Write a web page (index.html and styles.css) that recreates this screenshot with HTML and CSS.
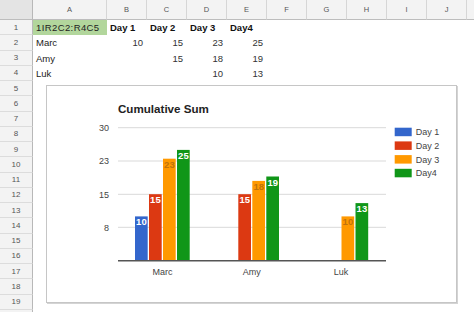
FILE: index.html
```html
<!DOCTYPE html>
<html lang="en">
<head>
    <meta charset="UTF-8">
    <title>Cumulative Sum</title>
    <link rel="stylesheet" href="styles.css">
</head>
<body>
    <div class="sheet">
        <div class="row head">
            <div class="num corner"></div>
            <div class="col wide">A</div>
            <div class="col">B</div>
            <div class="col">C</div>
            <div class="col">D</div>
            <div class="col">E</div>
            <div class="col">F</div>
            <div class="col">G</div>
            <div class="col">H</div>
            <div class="col">I</div>
            <div class="col">J</div>
            <div class="col rest"></div>
        </div>
        <div class="row">
            <div class="num">1</div>
            <div class="cell wide range">1IR2C2:R4C5</div>
            <div class="cell bold">Day 1</div>
            <div class="cell bold">Day 2</div>
            <div class="cell bold">Day 3</div>
            <div class="cell bold">Day4</div>
        </div>
        <div class="row">
            <div class="num">2</div>
            <div class="cell wide">Marc</div>
            <div class="cell value">10</div>
            <div class="cell value">15</div>
            <div class="cell value">23</div>
            <div class="cell value">25</div>
        </div>
        <div class="row">
            <div class="num">3</div>
            <div class="cell wide">Amy</div>
            <div class="cell value"></div>
            <div class="cell value">15</div>
            <div class="cell value">18</div>
            <div class="cell value">19</div>
        </div>
        <div class="row">
            <div class="num">4</div>
            <div class="cell wide">Luk</div>
            <div class="cell value"></div>
            <div class="cell value"></div>
            <div class="cell value">10</div>
            <div class="cell value">13</div>
        </div>
        <div class="row"><div class="num">5</div></div>
        <div class="row"><div class="num">6</div></div>
        <div class="row"><div class="num">7</div></div>
        <div class="row"><div class="num">8</div></div>
        <div class="row"><div class="num">9</div></div>
        <div class="row"><div class="num">10</div></div>
        <div class="row"><div class="num">11</div></div>
        <div class="row"><div class="num">12</div></div>
        <div class="row"><div class="num">13</div></div>
        <div class="row"><div class="num">14</div></div>
        <div class="row"><div class="num">15</div></div>
        <div class="row"><div class="num">16</div></div>
        <div class="row"><div class="num">17</div></div>
        <div class="row"><div class="num">18</div></div>
        <div class="row"><div class="num">19</div></div>
        <div class="row"><div class="num"></div></div>
    </div>

    <div class="chart">
        <svg width="409" height="216" viewBox="0 0 409 216">
            <text class="title" x="71" y="26.5">Cumulative Sum</text>

            <!-- grid -->
            <g class="grid">
                <line x1="71" x2="339" y1="41.7" y2="41.7"/>
                <line x1="71" x2="339" y1="75" y2="75"/>
                <line x1="71" x2="339" y1="108.3" y2="108.3"/>
                <line x1="71" x2="339" y1="141.3" y2="141.3"/>
            </g>
            <g class="axis-label" text-anchor="end">
                <text x="62" y="44.9">30</text>
                <text x="62" y="78.2">23</text>
                <text x="62" y="111.5">15</text>
                <text x="62" y="144.5">8</text>
            </g>

            <!-- Marc -->
            <rect class="day1" x="88" y="130.4" width="12.7" height="44.3"/>
            <rect class="day2" x="102" y="108.2" width="12.7" height="66.5"/>
            <rect class="day3" x="116" y="72.7" width="12.7" height="102"/>
            <rect class="day4" x="130" y="63.9" width="12.7" height="110.8"/>
            <!-- Amy -->
            <rect class="day2" x="191.3" y="108.2" width="12.7" height="66.5"/>
            <rect class="day3" x="205.3" y="94.9" width="12.7" height="79.8"/>
            <rect class="day4" x="219.3" y="90.5" width="12.7" height="84.2"/>
            <!-- Luk -->
            <rect class="day3" x="294.5" y="130.4" width="12.7" height="44.3"/>
            <rect class="day4" x="308.5" y="117.1" width="12.7" height="57.6"/>

            <g class="bar-label" text-anchor="middle">
                <text x="94.4" y="139.4">10</text>
                <text x="108.4" y="117.2">15</text>
                <text class="dark" x="122.4" y="81.7">23</text>
                <text x="136.4" y="72.9">25</text>
                <text x="197.7" y="117.2">15</text>
                <text class="dark" x="211.7" y="103.9">18</text>
                <text x="225.7" y="99.5">19</text>
                <text class="dark" x="300.9" y="139.4">10</text>
                <text x="314.9" y="126.1">13</text>
            </g>

            <line class="baseline" x1="71" x2="339" y1="174.7" y2="174.7"/>

            <g class="axis-label" text-anchor="middle">
                <text x="115.6" y="188.5">Marc</text>
                <text x="204.8" y="188.5">Amy</text>
                <text x="294" y="188.5">Luk</text>
            </g>

            <!-- legend -->
            <rect class="day1" x="347.7" y="41.7" width="17" height="8.5"/>
            <rect class="day2" x="347.7" y="55.4" width="17" height="8.5"/>
            <rect class="day3" x="347.7" y="69.1" width="17" height="8.5"/>
            <rect class="day4" x="347.7" y="82.8" width="17" height="8.5"/>
            <g class="legend">
                <text x="368.7" y="49.3">Day 1</text>
                <text x="368.7" y="63">Day 2</text>
                <text x="368.7" y="76.7">Day 3</text>
                <text x="368.7" y="90.4">Day4</text>
            </g>
        </svg>
    </div>
</body>
</html>
```

FILE: styles.css
```css
body {
    margin: 0;
    background: #fff;
    font-family: "Liberation Sans", Arial, sans-serif;
    color: #222;
    overflow: hidden;
}

.sheet {
    display: flex;
    flex-direction: column;
}

.row {
    display: flex;
    height: 15.25px;
}

.row.head {
    height: 20px;
}

.num {
    box-sizing: border-box;
    width: 33px;
    flex: none;
    display: flex;
    align-items: center;
    justify-content: center;
    background: #f3f3f3;
    border-right: 1px solid #b8b8b8;
    border-bottom: 1px solid #dcdcdc;
    font-size: 8px;
    color: #555;
}

.head .num,
.head .col {
    border-bottom: 1px solid #bdbdbd;
}

.corner {
    background: #e4e4e4;
}

.col {
    box-sizing: border-box;
    width: 40px;
    flex: none;
    display: flex;
    align-items: center;
    justify-content: center;
    background: #f3f3f3;
    border-right: 1px solid #d6d6d6;
    font-size: 7.5px;
    color: #555;
}

.col.wide {
    width: 74px;
}

.col.rest {
    flex: 1;
    border-right: none;
}

.cell {
    box-sizing: border-box;
    width: 40px;
    flex: none;
    display: flex;
    align-items: center;
    padding: 0 3px;
    font-size: 9.5px;
    white-space: nowrap;
}

.cell.wide {
    width: 74px;
}

.range {
    background: #b2d69c;
    letter-spacing: 0.4px;
}

.bold {
    font-weight: 700;
    color: #111;
}

.value {
    justify-content: flex-end;
    padding-right: 4px;
    color: #333;
}

.chart {
    position: absolute;
    left: 46px;
    top: 85px;
    width: 409px;
    height: 216px;
    background: #fff;
    border: 1px solid #c6c6c6;
    box-shadow: 1px 1px 0 #d4d4d4;
}

.chart svg {
    display: block;
    font-family: "Liberation Sans", Arial, sans-serif;
}

.title {
    font-size: 11.6px;
    font-weight: 700;
    fill: #222;
}

.grid line {
    stroke: #d9d9d9;
    stroke-width: 1;
}

.baseline {
    stroke: #555;
    stroke-width: 1.5;
}

.axis-label text,
.legend text {
    font-size: 9px;
    fill: #444;
}

.bar-label text {
    font-size: 9.5px;
    font-weight: 700;
    fill: #fff;
}

.bar-label text.dark {
    fill: #c0730c;
}

.day1 { fill: #3366cc; }
.day2 { fill: #dc3912; }
.day3 { fill: #ff9900; }
.day4 { fill: #109618; }
```
